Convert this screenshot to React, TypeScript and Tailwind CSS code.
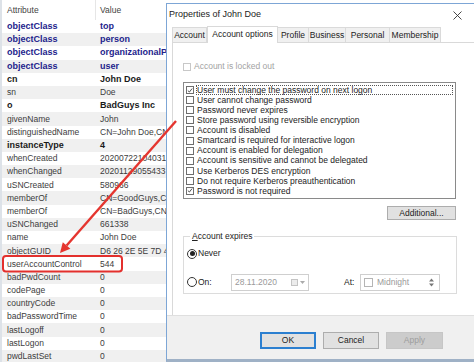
import React from 'react';

type Row = { attr: string; value: string; kind?: 'blue' | 'bold' };

// values are shortened where the dialog covers them
const rows: Row[] = [
  { attr: 'objectClass', value: 'top', kind: 'blue' },
  { attr: 'objectClass', value: 'person', kind: 'blue' },
  { attr: 'objectClass', value: 'organizationalPerson', kind: 'blue' },
  { attr: 'objectClass', value: 'user', kind: 'blue' },
  { attr: 'cn', value: 'John Doe', kind: 'bold' },
  { attr: 'sn', value: 'Doe' },
  { attr: 'o', value: 'BadGuys Inc', kind: 'bold' },
  { attr: 'givenName', value: 'John' },
  { attr: 'distinguishedName', value: 'CN=John Doe,CN' },
  { attr: 'instanceType', value: '4', kind: 'bold' },
  { attr: 'whenCreated', value: '20200722104031' },
  { attr: 'whenChanged', value: '20201129055433' },
  { attr: 'uSNCreated', value: '580966' },
  { attr: 'memberOf', value: 'CN=GoodGuys,CN' },
  { attr: 'memberOf', value: 'CN=BadGuys,CN' },
  { attr: 'uSNChanged', value: '661338' },
  { attr: 'name', value: 'John Doe' },
  { attr: 'objectGUID', value: 'D6 26 2E 5E 7D 4A' },
  { attr: 'userAccountControl', value: '544' },
  { attr: 'badPwdCount', value: '0' },
  { attr: 'codePage', value: '0' },
  { attr: 'countryCode', value: '0' },
  { attr: 'badPasswordTime', value: '0' },
  { attr: 'lastLogoff', value: '0' },
  { attr: 'lastLogon', value: '0' },
  { attr: 'pwdLastSet', value: '0' },
];

const options: { label: string; checked?: boolean }[] = [
  { label: 'User must change the password on next logon', checked: true },
  { label: 'User cannot change password' },
  { label: 'Password never expires' },
  { label: 'Store password using reversible encryption' },
  { label: 'Account is disabled' },
  { label: 'Smartcard is required for interactive logon' },
  { label: 'Account is enabled for delegation' },
  { label: 'Account is sensitive and cannot be delegated' },
  { label: 'Use Kerberos DES encryption' },
  { label: 'Do not require Kerberos preauthentication' },
  { label: 'Password is not required', checked: true },
];

const tabs = [
  { name: 'Account', w: 'w-[35px]' },
  { name: 'Account options', w: 'w-[71px]' },
  { name: 'Profile', w: 'w-[32px]' },
  { name: 'Business', w: 'w-[38px]' },
  { name: 'Personal', w: 'w-[45px]' },
  { name: 'Membership', w: 'w-[52px]' },
];

const rowClass = (kind?: 'blue' | 'bold') => {
  if (kind === 'blue') return 'font-bold text-[9px] text-[#23238c]';
  if (kind === 'bold') return 'font-bold text-[9px] text-[#1a1a1a]';
  return 'text-[8.5px] text-[#3c3c3c]';
};

const Check = ({ checked, disabled }: { checked?: boolean; disabled?: boolean }) => (
  <span
    className={`flex h-[8px] w-[8px] shrink-0 items-center justify-center border bg-white ${
      disabled ? 'border-[#c8c8c8]' : 'border-[#6e6e6e]'
    }`}
  >
    {checked && (
      <svg width="7" height="7" viewBox="0 0 7 7">
        <path d="M1 3.6 L2.8 5.3 L6 1.2" fill="none" stroke="#333" strokeWidth="1" />
      </svg>
    )}
  </span>
);

const Radio = ({ on }: { on?: boolean }) => (
  <span className="flex h-[10px] w-[10px] shrink-0 items-center justify-center rounded-full border border-[#333] bg-white">
    {on && <span className="h-[5px] w-[5px] rounded-full bg-[#222]" />}
  </span>
);

const AttributeList = () => (
  <div className="h-full w-full border-l-2 border-[#dde2e8] bg-white">
    <div className="flex h-[20px] items-center text-[8.5px] text-[#444]">
      <div className="flex h-full w-[94px] items-center border-r border-[#e6e6e6] pl-[5px]">Attribute</div>
      <div className="pl-[4px]">Value</div>
    </div>
    {rows.map((r, i) => (
      <div
        key={i}
        className={`flex h-[13.2px] items-center whitespace-nowrap leading-none ${i % 2 ? 'bg-[#f0f0f0]' : 'bg-white'} ${rowClass(r.kind)}`}
      >
        <div className="w-[94px] shrink-0 pl-[5px]">{r.attr}</div>
        <div className="pl-[4px]">{r.value}</div>
      </div>
    ))}
  </div>
);

const Button = ({ label, kind }: { label: string; kind?: 'default' | 'disabled' }) => (
  <div
    className={`flex h-[17px] items-center justify-center text-[8.5px] ${
      kind === 'default'
        ? 'border-2 border-[#2b7fd0] bg-[#e1e1e1] text-[#222]'
        : kind === 'disabled'
        ? 'border border-[#c6c6c6] bg-[#cccccc] text-[#9d9d9d]'
        : 'border border-[#adadad] bg-[#e1e1e1] text-[#222]'
    }`}
  >
    {label}
  </div>
);

const PropertiesDialog = () => (
  <div className="absolute left-[166px] top-[3px] flex h-[359px] w-[316px] flex-col border border-b-[3px] border-[#7da6d6] border-b-[#9fb1c6] bg-white text-[#222]">
    <div className="flex h-[22px] shrink-0 items-center justify-between pl-[2px] pr-[19px] text-[9px]">
      <span>Properties of John Doe</span>
      <svg width="9" height="9" viewBox="0 0 9 9">
        <path d="M0.5 0.5 L8.5 8.5 M8.5 0.5 L0.5 8.5" stroke="#333" strokeWidth="0.9" />
      </svg>
    </div>

    <div className="flex h-[16px] shrink-0 items-end pl-[6px] text-[8.5px]">
      {tabs.map((t, i) =>
        i === 1 ? (
          <div key={t.name} className={`${t.w} relative z-10 -mb-px flex h-[17px] items-start justify-center border border-b-0 border-[#d9d9d9] bg-white pt-[1px]`}>
            {t.name}
          </div>
        ) : (
          <div key={t.name} className={`${t.w} -ml-px flex h-[15px] items-center justify-center border border-b-0 border-[#dadada] bg-[#f0f0f0]`}>
            {t.name}
          </div>
        )
      )}
    </div>

    <div className="ml-[5px] flex flex-1 flex-col border-l border-t border-[#d9d9d9] pl-[10px] text-[8.5px]">
      <div className="mt-[18px] flex h-[11px] items-center gap-[3px] text-[#a3a3a3]">
        <Check disabled />
        <span>Account is locked out</span>
      </div>

      <div className="mt-[10px] h-[117px] w-[273px] border border-[#8a8a8a] pl-[2px] pr-[2px] pt-[2px]">
        {options.map((o, i) => (
          <div key={o.label} className="flex h-[10.1px] items-center gap-[2px] leading-none">
            <Check checked={o.checked} />
            <span
              className={`flex h-full flex-1 items-center leading-none ${
                i === 0 ? 'border border-dotted border-[#555]' : 'border border-transparent'
              }`}
            >
              {o.label}
            </span>
          </div>
        ))}
      </div>

      <div className="mt-[7px] flex w-[273px] justify-end">
        <div className="flex h-[14px] w-[69px] items-center justify-center border border-[#adadad] bg-[#e1e1e1]">
          Additional...
        </div>
      </div>

      <fieldset className="mt-[12px] h-[62px] w-[274px] border border-[#dcdcdc] pl-[3px]">
        <legend className="ml-[3px] px-[2px] leading-none">
          <span className="underline">A</span>ccount expires
        </legend>
        <div className="mt-[7px] flex h-[12px] items-center gap-[1px]">
          <Radio on />
          <span>Never</span>
        </div>
        <div className="mt-[14px] flex h-[17px] items-center">
          <Radio />
          <span className="ml-[1px] w-[33px]">On:</span>
          <div className="flex h-[17px] w-[78px] items-center border border-[#cfcfcf] pl-[3px] text-[#9a9a9a]">
            <span className="flex-1">28.11.2020</span>
            <span className="mr-[2px] h-[7px] w-[7px] border border-[#c4c4c4] bg-[#ececec]" />
            <svg width="5" height="3" viewBox="0 0 5 3" className="mr-[3px]">
              <path d="M0 0 L5 0 L2.5 3 Z" fill="#aaa" />
            </svg>
          </div>
          <span className="ml-[35px] w-[16px]">At:</span>
          <div className="flex h-[17px] w-[80px] items-center border border-[#cfcfcf] pl-[3px] text-[#9a9a9a]">
            <span className="h-[9px] w-[9px] border border-[#b5b5b5] bg-white" />
            <span className="ml-[4px] flex-1">Midnight</span>
            <svg width="5" height="9" viewBox="0 0 5 9" className="mr-[5px]">
              <path d="M0 3.5 L2.5 0.5 L5 3.5 Z M0 5.5 L2.5 8.5 L5 5.5 Z" fill="#777" />
            </svg>
          </div>
        </div>
      </fieldset>
    </div>

    <div className="flex h-[44px] shrink-0 items-start gap-[7px] border-t border-[#dfdfdf] bg-[#f0f0f0] pl-[93px] pt-[16px]">
      <div className="w-[56px]">
        <Button label="OK" kind="default" />
      </div>
      <div className="w-[56px]">
        <Button label="Cancel" />
      </div>
      <div className="w-[57px]">
        <Button label="Apply" kind="disabled" />
      </div>
    </div>
  </div>
);

const Annotations = () => (
  <svg className="pointer-events-none absolute left-0 top-0 z-20" width="474" height="362">
    <rect x="3" y="256" width="119" height="15.5" rx="3" fill="none" stroke="#e3302d" strokeWidth="2" />
    <line x1="176" y1="121" x2="66.6" y2="245.5" stroke="#e5352f" strokeWidth="2.4" />
    <polygon points="60,253 70.4,248.8 62.8,242.2" fill="#e5352f" />
  </svg>
);

export default function App() {
  return (
    <div
      className="relative h-[362px] w-[474px] overflow-hidden bg-white"
      style={{ fontFamily: '"Liberation Sans", Arial, sans-serif' }}
    >
      <AttributeList />
      <PropertiesDialog />
      <Annotations />
    </div>
  );
}
